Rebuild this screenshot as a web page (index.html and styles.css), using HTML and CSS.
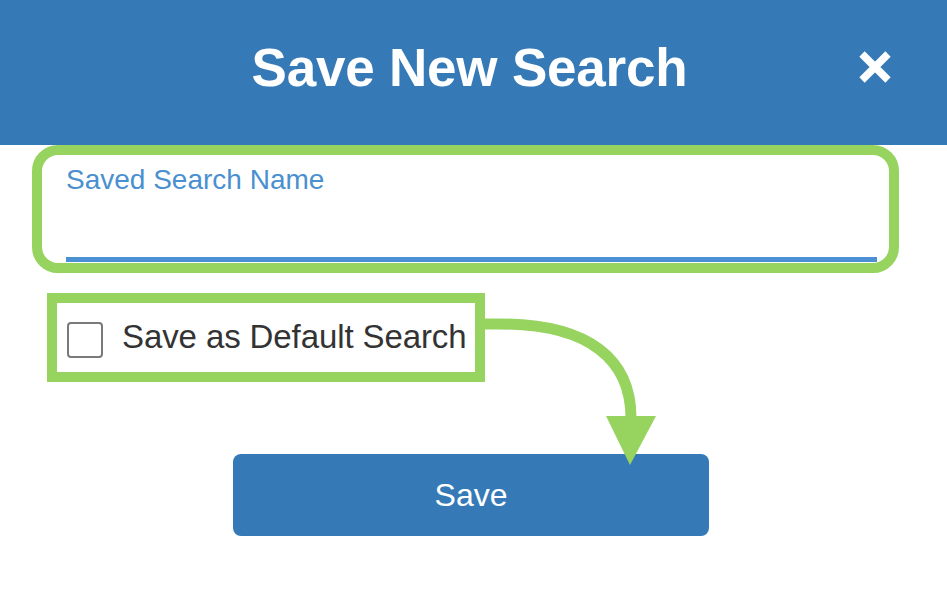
FILE: index.html
```html
<!DOCTYPE html>
<html>
<head>
<meta charset="utf-8">
<link rel="stylesheet" href="styles.css">
</head>
<body>
<div class="dialog">
  <header class="dialog-header">
    <span class="spacer"></span>
    <h1 class="title">Save New Search</h1>
    <button class="close" aria-label="Close">
      <svg width="36" height="36" viewBox="0 0 36 36"><path d="M5 5 L31 31 M31 5 L5 31" stroke="#fff" stroke-width="7.5" fill="none"/></svg>
    </button>
  </header>
  <div class="field-box">
    <label class="field-label">Saved Search Name</label>
    <div class="field-input"></div>
  </div>
  <div class="check-box">
    <span class="checkbox"></span>
    <span class="check-label">Save as Default Search</span>
  </div>
  <button class="save-btn">Save</button>
  <svg class="arrow" width="947" height="597" viewBox="0 0 947 597">
    <path d="M483 324 H500 C590 324 631 360 631 418" stroke="#96d35f" stroke-width="11" fill="none"/>
    <polygon points="606,416 656,416 630,465" fill="#96d35f"/>
  </svg>
</div>
</body>
</html>
```

FILE: styles.css
```css
html, body {
  margin: 0;
  padding: 0;
  background: #fff;
}
body {
  font-family: "Liberation Sans", Arial, sans-serif;
}
.dialog {
  position: relative;
  width: 947px;
  height: 597px;
  overflow: hidden;
}
.dialog-header {
  box-sizing: border-box;
  height: 145px;
  background: #357ab7;
  display: grid;
  grid-template-columns: 1fr auto 1fr;
  align-items: start;
  padding: 41px 8px 0 0;
}
.title {
  margin: 0;
  font-size: 53px;
  line-height: 1;
  font-weight: bold;
  color: #fff;
  letter-spacing: -0.2px;
}
.close {
  justify-self: end;
  margin: 8px 46px 0 0;
  padding: 0;
  border: 0;
  background: none;
  width: 36px;
  height: 36px;
  display: block;
}
.close svg { display: block; }
.field-box {
  width: 867px;
  box-sizing: border-box;
  margin-left: 32px;
  border: 10px solid #96d35f;
  border-radius: 26px;
  padding: 11px 12px 1px 24px;
}
.field-label {
  display: block;
  font-size: 28px;
  line-height: 1;
  color: #4a90d0;
}
.field-input {
  height: 63px;
  border-bottom: 5px solid #4a90d2;
}
.check-box {
  display: inline-flex;
  align-items: flex-start;
  gap: 19px;
  margin: 20px 0 0 47px;
  border: 10px solid #96d35f;
  padding: 19px 8px 14px 10px;
}
.checkbox {
  box-sizing: border-box;
  width: 36px;
  height: 36px;
  border: 2.5px solid #7a7a7a;
  border-radius: 4px;
  background: #fff;
}
.check-label {
  font-size: 33px;
  line-height: 1;
  color: #333;
  margin-top: -2px;
  letter-spacing: -0.1px;
}
.save-btn {
  display: block;
  margin: 72px 0 0 233px;
  width: 476px;
  height: 82px;
  border: 0;
  border-radius: 8px;
  background: #357ab7;
  color: #fff;
  font-family: "Liberation Sans", Arial, sans-serif;
  font-size: 32px;
  padding: 0;
}
.arrow {
  position: absolute;
  left: 0;
  top: 0;
  pointer-events: none;
}
```
